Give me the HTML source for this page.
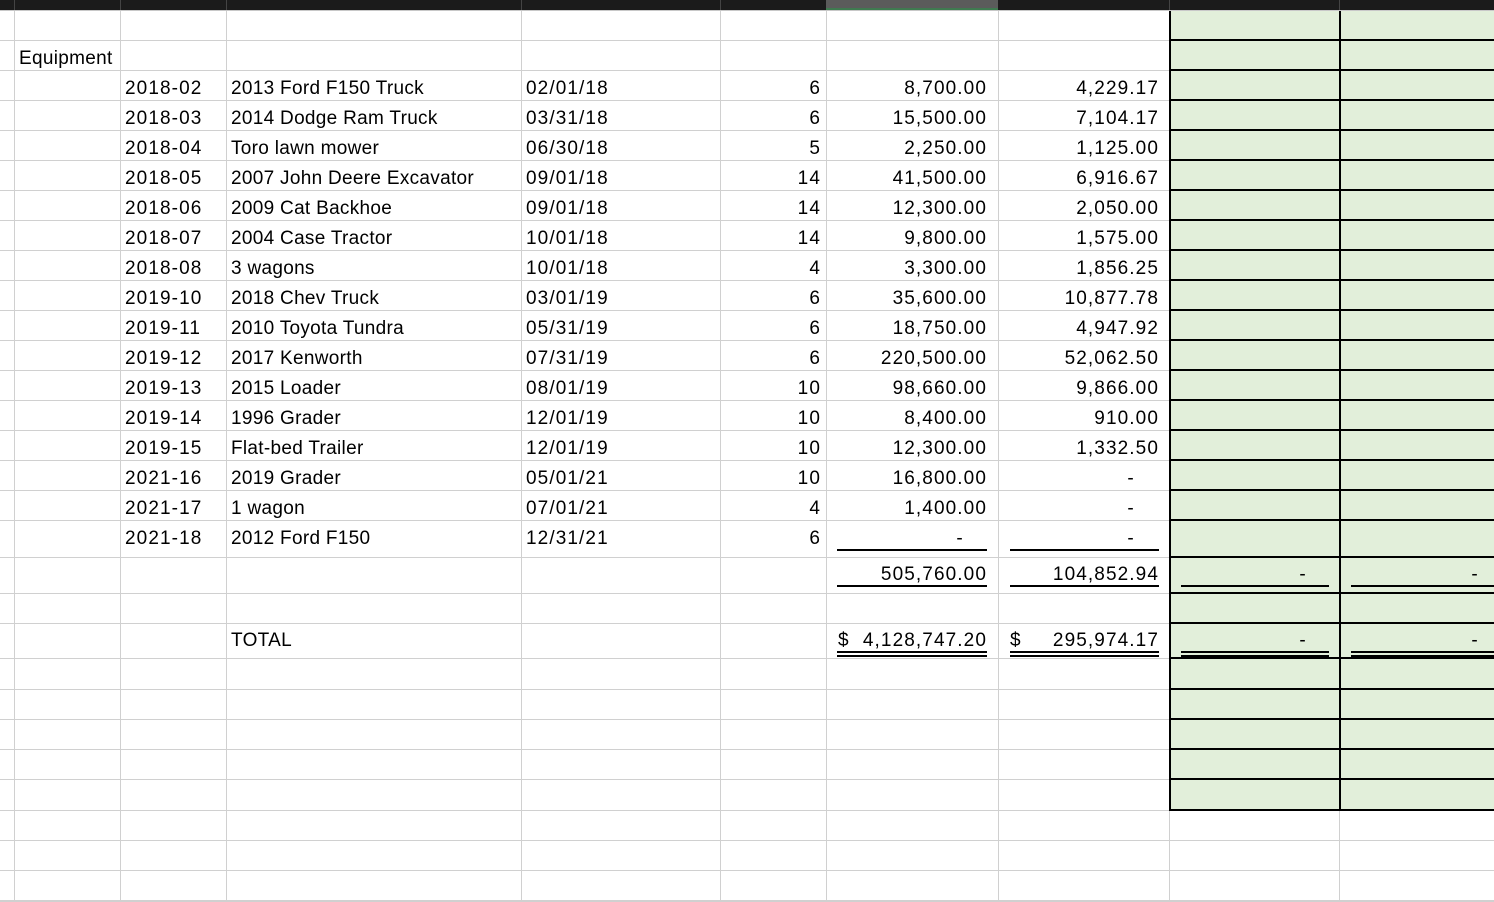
<!DOCTYPE html>
<html><head><meta charset="utf-8"><style>
body{margin:0;width:1494px;height:902px;overflow:hidden;background:#fff;position:relative;font-family:"Liberation Sans",sans-serif}
div{position:absolute;box-sizing:border-box}
.h{height:1px;background:#d0d0d0;left:0;width:1494px}
.v{width:1px;background:#d0d0d0;top:11px;height:891px}
.bh{height:2px;background:#000;left:1169px;width:325px}
.t{font-size:19px;line-height:20px;white-space:nowrap;color:#000;letter-spacing:0.3px;margin-top:2px}
.n{letter-spacing:1.1px}
.u{height:2px;background:#000}
</style></head><body>
<div style="left:0;top:0;width:1494px;height:10px;background:#1b1b1b"></div>
<div style="left:826px;top:0;width:172px;height:8px;background:#5b5b5b"></div>
<div style="left:826px;top:8px;width:172px;height:3px;background:#3f7a50"></div>
<div style="left:0;top:10px;width:1494px;height:1px;background:#c8c8c8"></div>
<div style="left:14px;top:0;width:1px;height:10px;background:#444"></div>
<div style="left:120px;top:0;width:1px;height:10px;background:#444"></div>
<div style="left:226px;top:0;width:1px;height:10px;background:#444"></div>
<div style="left:521px;top:0;width:1px;height:10px;background:#444"></div>
<div style="left:720px;top:0;width:1px;height:10px;background:#444"></div>
<div style="left:1169px;top:0;width:1px;height:10px;background:#444"></div>
<div style="left:1339px;top:0;width:1px;height:10px;background:#444"></div>

<div style="left:1169px;top:11px;width:325px;height:799px;background:#e2efda"></div>

<div class="h" style="top:40px"></div><div class="h" style="top:70px"></div><div class="h" style="top:100px"></div><div class="h" style="top:130px"></div><div class="h" style="top:160px"></div><div class="h" style="top:190px"></div><div class="h" style="top:220px"></div><div class="h" style="top:250px"></div><div class="h" style="top:280px"></div><div class="h" style="top:310px"></div><div class="h" style="top:340px"></div><div class="h" style="top:370px"></div><div class="h" style="top:400px"></div><div class="h" style="top:430px"></div><div class="h" style="top:460px"></div><div class="h" style="top:490px"></div><div class="h" style="top:520px"></div><div class="h" style="top:557px"></div><div class="h" style="top:593px"></div><div class="h" style="top:623px"></div><div class="h" style="top:658px"></div><div class="h" style="top:689px"></div><div class="h" style="top:719px"></div><div class="h" style="top:749px"></div><div class="h" style="top:779px"></div><div class="h" style="top:810px"></div><div class="h" style="top:840px"></div><div class="h" style="top:870px"></div><div class="h" style="top:900px;height:2px"></div>

<div class="v" style="left:14px"></div><div class="v" style="left:120px"></div><div class="v" style="left:226px"></div><div class="v" style="left:521px"></div><div class="v" style="left:720px"></div><div class="v" style="left:826px"></div><div class="v" style="left:998px"></div><div class="v" style="left:1169px"></div><div class="v" style="left:1339px"></div>

<div class="bh" style="top:39px"></div><div class="bh" style="top:69px"></div><div class="bh" style="top:99px"></div><div class="bh" style="top:129px"></div><div class="bh" style="top:159px"></div><div class="bh" style="top:189px"></div><div class="bh" style="top:219px"></div><div class="bh" style="top:249px"></div><div class="bh" style="top:279px"></div><div class="bh" style="top:309px"></div><div class="bh" style="top:339px"></div><div class="bh" style="top:369px"></div><div class="bh" style="top:399px"></div><div class="bh" style="top:429px"></div><div class="bh" style="top:459px"></div><div class="bh" style="top:489px"></div><div class="bh" style="top:519px"></div><div class="bh" style="top:556px"></div><div class="bh" style="top:592px"></div><div class="bh" style="top:622px"></div><div class="bh" style="top:657px"></div><div class="bh" style="top:688px"></div><div class="bh" style="top:718px"></div><div class="bh" style="top:748px"></div><div class="bh" style="top:778px"></div><div class="bh" style="top:809px"></div>
<div style="left:1169px;top:11px;width:2px;height:800px;background:#000"></div>
<div style="left:1339px;top:11px;width:2px;height:800px;background:#000"></div>

<div class="t" style="left:19px;top:47px;letter-spacing:0.3px">Equipment</div>

<div class="t n" style="left:125px;top:77px">2018-02</div><div class="t" style="left:231px;top:77px">2013 Ford F150 Truck</div><div class="t n" style="left:526px;top:77px">02/01/18</div><div class="t n" style="right:673px;top:77px">6</div><div class="t n" style="right:507px;top:77px">8,700.00</div><div class="t n" style="right:335px;top:77px">4,229.17</div>
<div class="t n" style="left:125px;top:107px">2018-03</div><div class="t" style="left:231px;top:107px">2014 Dodge Ram Truck</div><div class="t n" style="left:526px;top:107px">03/31/18</div><div class="t n" style="right:673px;top:107px">6</div><div class="t n" style="right:507px;top:107px">15,500.00</div><div class="t n" style="right:335px;top:107px">7,104.17</div>
<div class="t n" style="left:125px;top:137px">2018-04</div><div class="t" style="left:231px;top:137px">Toro lawn mower</div><div class="t n" style="left:526px;top:137px">06/30/18</div><div class="t n" style="right:673px;top:137px">5</div><div class="t n" style="right:507px;top:137px">2,250.00</div><div class="t n" style="right:335px;top:137px">1,125.00</div>
<div class="t n" style="left:125px;top:167px">2018-05</div><div class="t" style="left:231px;top:167px">2007 John Deere Excavator</div><div class="t n" style="left:526px;top:167px">09/01/18</div><div class="t n" style="right:673px;top:167px">14</div><div class="t n" style="right:507px;top:167px">41,500.00</div><div class="t n" style="right:335px;top:167px">6,916.67</div>
<div class="t n" style="left:125px;top:197px">2018-06</div><div class="t" style="left:231px;top:197px">2009 Cat Backhoe</div><div class="t n" style="left:526px;top:197px">09/01/18</div><div class="t n" style="right:673px;top:197px">14</div><div class="t n" style="right:507px;top:197px">12,300.00</div><div class="t n" style="right:335px;top:197px">2,050.00</div>
<div class="t n" style="left:125px;top:227px">2018-07</div><div class="t" style="left:231px;top:227px">2004 Case Tractor</div><div class="t n" style="left:526px;top:227px">10/01/18</div><div class="t n" style="right:673px;top:227px">14</div><div class="t n" style="right:507px;top:227px">9,800.00</div><div class="t n" style="right:335px;top:227px">1,575.00</div>
<div class="t n" style="left:125px;top:257px">2018-08</div><div class="t" style="left:231px;top:257px">3 wagons</div><div class="t n" style="left:526px;top:257px">10/01/18</div><div class="t n" style="right:673px;top:257px">4</div><div class="t n" style="right:507px;top:257px">3,300.00</div><div class="t n" style="right:335px;top:257px">1,856.25</div>
<div class="t n" style="left:125px;top:287px">2019-10</div><div class="t" style="left:231px;top:287px">2018 Chev Truck</div><div class="t n" style="left:526px;top:287px">03/01/19</div><div class="t n" style="right:673px;top:287px">6</div><div class="t n" style="right:507px;top:287px">35,600.00</div><div class="t n" style="right:335px;top:287px">10,877.78</div>
<div class="t n" style="left:125px;top:317px">2019-11</div><div class="t" style="left:231px;top:317px">2010 Toyota Tundra</div><div class="t n" style="left:526px;top:317px">05/31/19</div><div class="t n" style="right:673px;top:317px">6</div><div class="t n" style="right:507px;top:317px">18,750.00</div><div class="t n" style="right:335px;top:317px">4,947.92</div>
<div class="t n" style="left:125px;top:347px">2019-12</div><div class="t" style="left:231px;top:347px">2017 Kenworth</div><div class="t n" style="left:526px;top:347px">07/31/19</div><div class="t n" style="right:673px;top:347px">6</div><div class="t n" style="right:507px;top:347px">220,500.00</div><div class="t n" style="right:335px;top:347px">52,062.50</div>
<div class="t n" style="left:125px;top:377px">2019-13</div><div class="t" style="left:231px;top:377px">2015 Loader</div><div class="t n" style="left:526px;top:377px">08/01/19</div><div class="t n" style="right:673px;top:377px">10</div><div class="t n" style="right:507px;top:377px">98,660.00</div><div class="t n" style="right:335px;top:377px">9,866.00</div>
<div class="t n" style="left:125px;top:407px">2019-14</div><div class="t" style="left:231px;top:407px">1996 Grader</div><div class="t n" style="left:526px;top:407px">12/01/19</div><div class="t n" style="right:673px;top:407px">10</div><div class="t n" style="right:507px;top:407px">8,400.00</div><div class="t n" style="right:335px;top:407px">910.00</div>
<div class="t n" style="left:125px;top:437px">2019-15</div><div class="t" style="left:231px;top:437px">Flat-bed Trailer</div><div class="t n" style="left:526px;top:437px">12/01/19</div><div class="t n" style="right:673px;top:437px">10</div><div class="t n" style="right:507px;top:437px">12,300.00</div><div class="t n" style="right:335px;top:437px">1,332.50</div>
<div class="t n" style="left:125px;top:467px">2021-16</div><div class="t" style="left:231px;top:467px">2019 Grader</div><div class="t n" style="left:526px;top:467px">05/01/21</div><div class="t n" style="right:673px;top:467px">10</div><div class="t n" style="right:507px;top:467px">16,800.00</div><div class="t" style="right:360px;top:467px">-</div>
<div class="t n" style="left:125px;top:497px">2021-17</div><div class="t" style="left:231px;top:497px">1 wagon</div><div class="t n" style="left:526px;top:497px">07/01/21</div><div class="t n" style="right:673px;top:497px">4</div><div class="t n" style="right:507px;top:497px">1,400.00</div><div class="t" style="right:360px;top:497px">-</div>
<div class="t n" style="left:125px;top:527px">2021-18</div><div class="t" style="left:231px;top:527px">2012 Ford F150</div><div class="t n" style="left:526px;top:527px">12/31/21</div><div class="t n" style="right:673px;top:527px">6</div><div class="t" style="right:531px;top:527px">-</div><div class="t" style="right:360px;top:527px">-</div>
<div class="u" style="left:837px;top:549px;width:150px"></div><div class="u" style="left:1010px;top:549px;width:149px"></div>

<div class="t n" style="right:507px;top:563px">505,760.00</div><div class="t n" style="right:335px;top:563px">104,852.94</div><div class="t" style="right:188px;top:563px">-</div><div class="t" style="right:16px;top:563px">-</div>
<div class="u" style="left:837px;top:585px;width:150px"></div><div class="u" style="left:1010px;top:585px;width:149px"></div><div class="u" style="left:1181px;top:585px;width:148px"></div><div class="u" style="left:1351px;top:585px;width:143px"></div>

<div class="t" style="left:231px;top:629px">TOTAL</div>
<div class="t" style="left:838px;top:629px">$</div><div class="t n" style="right:507px;top:629px">4,128,747.20</div>
<div class="t" style="left:1010px;top:629px">$</div><div class="t n" style="right:335px;top:629px">295,974.17</div>
<div class="t" style="right:188px;top:629px">-</div><div class="t" style="right:16px;top:629px">-</div>
<div class="u" style="left:837px;top:651px;width:150px"></div><div class="u" style="left:837px;top:655px;width:150px"></div>
<div class="u" style="left:1010px;top:651px;width:149px"></div><div class="u" style="left:1010px;top:655px;width:149px"></div>
<div class="u" style="left:1181px;top:651px;width:148px"></div><div class="u" style="left:1181px;top:655px;width:148px;height:3px"></div>
<div class="u" style="left:1351px;top:651px;width:143px"></div><div class="u" style="left:1351px;top:655px;width:143px;height:3px"></div>
</body></html>
